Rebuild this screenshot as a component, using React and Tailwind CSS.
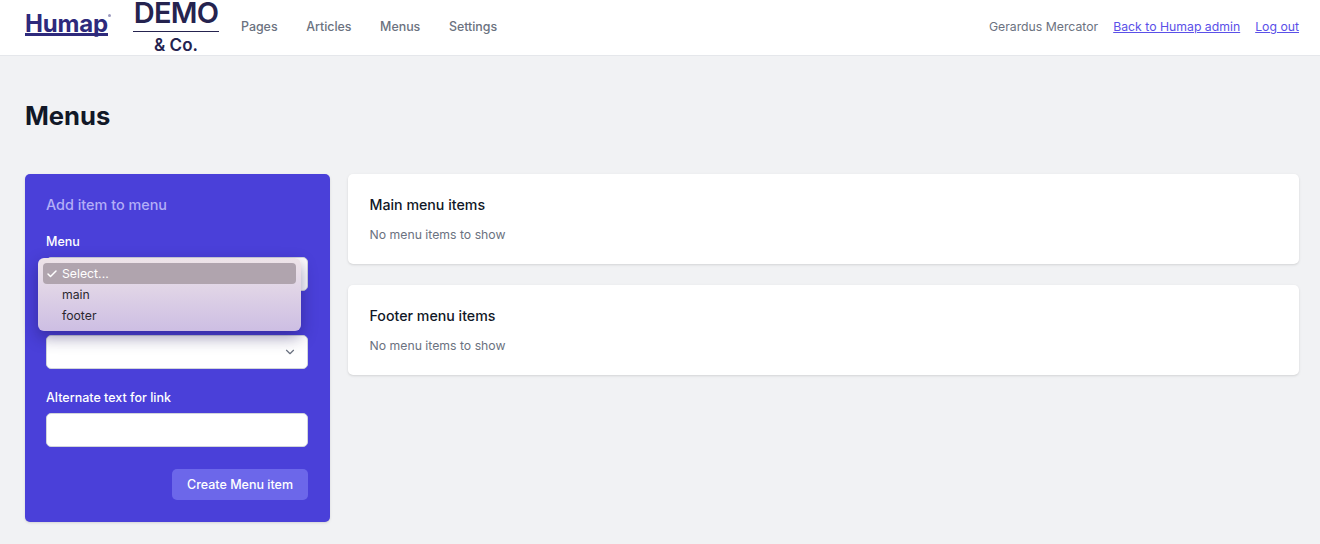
import { ChevronDown, Check } from 'lucide-react';

const navItems = ['Pages', 'Articles', 'Menus', 'Settings'];

const Header = () => (
  <header className="h-[56px] bg-white border-b border-[#e5e7eb] flex items-center justify-between pl-[25px] pr-[21px]">
    <div className="flex items-center">
      <div className="w-[87px] relative -top-[2px] flex items-start">
        <span className="text-[24px] leading-[18px] font-bold tracking-[-0.2px] text-[#2e2a7c] border-b-[3px] border-[#2e2a7c]">Humap</span>
        <span className="w-[3px] h-[3px] mt-[-1px] rounded-full bg-[#9d9bc0]"></span>
      </div>
      <div className="ml-[21px] w-[86px] h-[55px] flex flex-col items-center">
        <span className="text-[29px] leading-[26px] font-semibold text-[#25234f] tracking-[-0.8px]">DEMO</span>
        <span className="w-full h-px bg-[#25234f] mt-[5px] shrink-0"></span>
        <span className="text-[17px] leading-[20px] font-semibold text-[#25234f] mt-[3px]">&amp; Co.</span>
      </div>
      <nav className="ml-[22px] flex items-center gap-[28.6px]">
        {navItems.map((item) => (
          <a key={item} className="text-[12.4px] font-medium text-[#6b7280]">{item}</a>
        ))}
      </nav>
    </div>
    <div className="flex items-center text-[12.25px]">
      <span className="text-[#6b7280]">Gerardus Mercator</span>
      <a className="ml-[15px] text-[#5a50e8] underline">Back to Humap admin</a>
      <a className="ml-[15px] text-[#5a50e8] underline">Log out</a>
    </div>
  </header>
);

const SelectBox = () => (
  <div className="h-[34px] bg-white rounded-[5px] border border-[#d1d5db] flex items-center justify-end pr-[10px]">
    <ChevronDown className="w-[14px] h-[14px] text-[#6b7280]" />
  </div>
);

const MenuDropdown = () => (
  <div className="absolute left-[-8px] top-[1px] w-[263px] h-[73px] rounded-[6px] p-[5px] bg-gradient-to-b from-[#eee4e8] to-[#cdbee3] shadow-[0_6px_16px_rgba(30,20,90,0.45)] text-[12.25px] text-[#2b2730]">
    <div className="h-[21px] rounded-[4px] bg-[#b0a4ae] text-white flex items-center pl-[3px] pt-[1px]">
      <Check className="w-[12px] h-[12px] mr-[4px]" strokeWidth={3} />
      <span>Select...</span>
    </div>
    <div className="h-[21px] flex items-center pl-[19px] pt-[2px]">main</div>
    <div className="h-[21px] flex items-center pl-[19px] pt-[2px]">footer</div>
  </div>
);

const AddItemForm = () => (
  <div className="w-[305px] h-[348px] shrink-0 bg-[#4a40d9] rounded-[5px] pt-[21px] pl-[21px] pr-[22px] shadow-sm">
    <h2 className="text-[14.4px] leading-[20px] font-medium text-[#b3aef7]">Add item to menu</h2>
    <label className="block mt-[18px] text-[12.5px] leading-[18px] font-medium text-white">Menu</label>
    <div className="mt-[6px] relative">
      <SelectBox />
      <MenuDropdown />
    </div>
    <div className="mt-[44px]">
      <SelectBox />
    </div>
    <label className="block mt-[20px] text-[12.5px] leading-[18px] font-medium text-white">Alternate text for link</label>
    <div className="mt-[6px] h-[34px] bg-white rounded-[5px] border border-[#d1d5db]"></div>
    <div className="mt-[22px] flex justify-end">
      <button className="w-[136px] h-[31px] pt-[1px] rounded-[5px] bg-[#6c67ea] text-white text-[12.5px] font-medium">Create Menu item</button>
    </div>
  </div>
);

const MenuCard = ({ title }) => (
  <div className="h-[90px] bg-white rounded-[5px] shadow-sm pt-[21px] pl-[21.5px] pr-[21px]">
    <h3 className="text-[14.2px] leading-[20px] font-medium text-[#111827]">{title}</h3>
    <p className="mt-[11px] text-[12.25px] leading-[18px] text-[#6b7280]">No menu items to show</p>
  </div>
);

export default function App() {
  return (
    <div className="h-[544px] overflow-hidden bg-[#f1f2f4] font-['Inter',sans-serif]">
      <Header />
      <main className="pr-[21px] pl-[25px]">
        <h1 className="mt-[44px] text-[25.6px] leading-[32px] font-bold text-[#111827]">Menus</h1>
        <div className="mt-[42px] flex gap-[18px]">
          <AddItemForm />
          <div className="flex-1 flex flex-col gap-[21px]">
            <MenuCard title="Main menu items" />
            <MenuCard title="Footer menu items" />
          </div>
        </div>
      </main>
    </div>
  );
}
